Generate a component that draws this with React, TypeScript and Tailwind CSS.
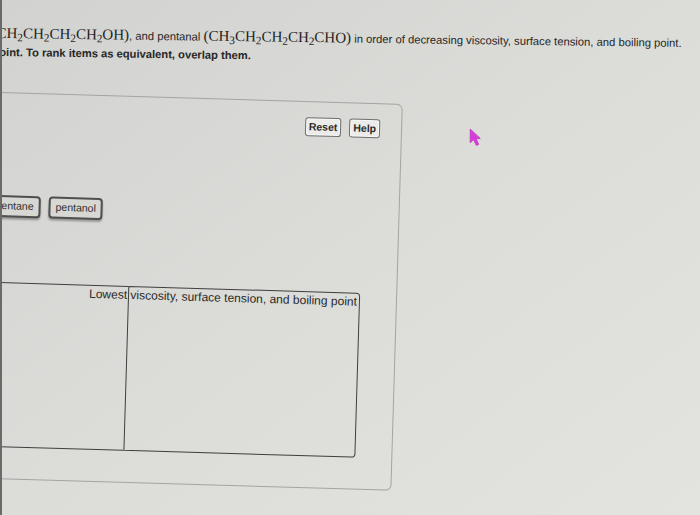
import React from 'react';

const serif = { fontFamily: '"Liberation Serif", "Times New Roman", serif' };

function Formula({ parts }: { parts: [string, string?][] }) {
  return (
    <span className="text-[15px] text-[#1f1f1f]" style={serif}>
      {parts.map(([base, sub], i) => (
        <React.Fragment key={i}>
          {base}
          {sub && <sub>{sub}</sub>}
        </React.Fragment>
      ))}
    </span>);

}

function Chip({ label, className = '' }: { label: string; className?: string }) {
  return (
    <div
      className={`h-[22px] px-[5px] flex items-center rounded-[4px] border-2 border-[#4f4f4f] bg-[#d7d7d4] text-[10.5px] text-[#2e2e2e] shadow-[0_2px_2px_rgba(0,0,0,0.3)] ${className}`}>

      {label}
    </div>);

}

function ToolButton({ label }: { label: string }) {
  return (
    <button className="h-[19px] px-[3px] rounded-[3px] border border-[#6f6f6f] bg-[#ececea] text-[10.5px] font-bold leading-[15px] text-[#2a2a2a] shadow-[inset_0_0_0_1px_#f8f8f6]">
      {label}
    </button>);

}

export default function App() {
  return (
    <div
      className="relative w-[700px] h-[515px] overflow-hidden bg-linear-to-br from-[#d2d2d0] via-[#dcdcd9] to-[#e3e3df] text-[#262626]"
      style={{ fontFamily: '"Liberation Sans", Arial, sans-serif' }}>

      {/* Question text */}
      <div className="pt-[24px] origin-top-left rotate-[0.75deg]">
        <div className="h-[19px] -ml-[3px] whitespace-nowrap text-[11.25px] leading-[18px]">
          <Formula parts={[['CH', '2'], ['CH', '2'], ['CH', '2'], ['CH', '2'], ['OH)']]} />
          , and pentanal{' '}
          <Formula parts={[['(CH', '3'], ['CH', '2'], ['CH', '2'], ['CH', '2'], ['CHO)']]} />
          {' '}in order of decreasing viscosity, surface tension, and boiling point.
        </div>
        <div className="mt-[1px] whitespace-nowrap text-[11.2px] leading-[16px] font-bold">
          oint. To rank items as equivalent, overlap them.
        </div>
      </div>

      {/* Ranking panel */}
      <div className="mt-[32px] origin-top-left rotate-[1.7deg]">
        <div className="-ml-[20px] w-[423px] h-[387px] border border-[#a4a4a2] rounded-r-[6px]">
          <div className="pt-[15px] pr-[21px] flex justify-end gap-[8px]">
            <ToolButton label="Reset" />
            <ToolButton label="Help" />
          </div>

          <div className="mt-[68px] pl-[11px] flex gap-[8px]">
            <Chip label="pentane" />
            <Chip label="pentanol" />
          </div>

          <div className="relative mt-[65px] h-[165px] flex">
            <div className="w-[153px] border-t-[1.5px] border-b-[1.5px] border-[#3f3f3f]" />
            <div className="w-[232px] border-[1.5px] border-[#3f3f3f] rounded-r-[4px]" />
            <div className="absolute top-[2px] left-[0px] w-[385px] pr-[3px] text-right text-[12px] leading-[14px] text-[#2a2a2a] whitespace-nowrap">
              Lowest viscosity, surface tension, and boiling point
            </div>
          </div>
        </div>
      </div>

      {/* Pointer */}
      <svg
        className="absolute left-[469px] top-[128px]"
        width="13"
        height="19"
        viewBox="0 0 12 18">

        <path
          d="M1 1 L1 14 L4.2 11 L6.8 16.5 L9 15.5 L6.5 10 L10.5 10 Z"
          fill="#d43fd8"
          stroke="#c236c6"
          strokeWidth="0.8"
          strokeLinejoin="round" />

      </svg>

      {/* Screen edge */}
      <div className="absolute left-0 top-0 bottom-0 w-[2px] bg-[#6a6a6a]" />
    </div>);

}
